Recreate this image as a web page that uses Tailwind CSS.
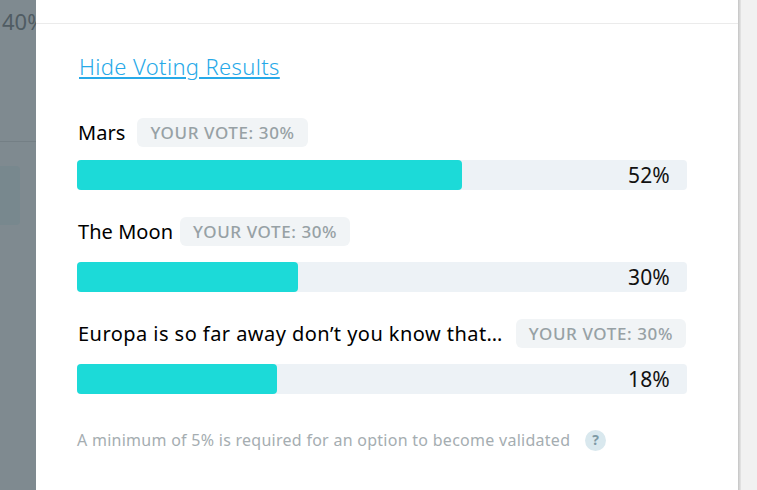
<!DOCTYPE html>
<html lang="en">
<head>
    <meta charset="UTF-8">
    <script src="https://cdn.jsdelivr.net/npm/@tailwindcss/browser@4"></script>
    <title>Voting results</title>
</head>
<body class="h-[490px] w-[757px] overflow-hidden bg-[#f1f1f1] font-['Noto_Sans',sans-serif]">
    <div class="flex h-[490px]">
        <!-- page behind the modal -->
        <aside class="relative w-[36px] shrink-0 overflow-hidden bg-[#7f8a90]">
            <span class="absolute left-[2px] top-[6px] text-[22px] leading-[30px] text-[#505c63]">40%</span>
            <div class="absolute left-0 top-[141px] h-px w-full bg-[#747f85]"></div>
            <div class="absolute left-[-10px] top-[166px] h-[59px] w-[30px] rounded bg-[#78888e]"></div>
        </aside>
        <!-- modal -->
        <main class="w-[702px] shrink-0 bg-white">
            <div class="h-[24px] border-b border-[#ebebeb]"></div>
            <div class="pl-[41px] pr-[51px] pt-[28px]">
                <a href="#" class="ml-[2px] text-[22px] font-light leading-[28px] tracking-[0.37px] text-[#27a9e8] underline">Hide Voting Results</a>
                <ul class="mt-[37px] flex flex-col gap-[27px]">
                    <li>
                        <div class="flex h-[29px] items-center gap-[12px]">
                            <span class="ml-px text-[20px] tracking-[0.05px] text-black">Mars</span>
                            <span class="flex h-[29px] items-center rounded-md bg-[#f1f4f6] px-[13px] text-[17px] font-medium tracking-[0.6px] text-[#97a1a5]">YOUR VOTE: 30%</span>
                        </div>
                        <div class="relative mt-[13px] flex h-[30px] items-center justify-end rounded-sm bg-[#edf2f6] pr-[17px] pt-[2px] text-[21px] tracking-[0.2px] text-[#111]">
                            <div class="absolute inset-y-0 left-0 w-[385px] rounded-sm bg-[#1cdad8]"></div>
                            <span class="relative">52%</span>
                        </div>
                    </li>
                    <li>
                        <div class="flex h-[29px] items-center gap-[7px]">
                            <span class="ml-px text-[20px] tracking-[0.05px] text-black">The Moon</span>
                            <span class="flex h-[29px] items-center rounded-md bg-[#f1f4f6] px-[13px] text-[17px] font-medium tracking-[0.6px] text-[#97a1a5]">YOUR VOTE: 30%</span>
                        </div>
                        <div class="relative mt-[16px] flex h-[30px] items-center justify-end rounded-sm bg-[#edf2f6] pr-[17px] pt-[2px] text-[21px] tracking-[0.2px] text-[#111]">
                            <div class="absolute inset-y-0 left-0 w-[221px] rounded-sm bg-[#1cdad8]"></div>
                            <span class="relative">30%</span>
                        </div>
                    </li>
                    <li>
                        <div class="flex h-[29px] items-center justify-between">
                            <span class="ml-px text-[20px] tracking-[0.45px] text-black">Europa is so far away don’t you know that…</span>
                            <span class="mr-px flex h-[29px] items-center rounded-md bg-[#f1f4f6] px-[13px] text-[17px] font-medium tracking-[0.6px] text-[#97a1a5]">YOUR VOTE: 30%</span>
                        </div>
                        <div class="relative mt-[16px] flex h-[30px] items-center justify-end rounded-sm bg-[#edf2f6] pr-[17px] pt-[2px] text-[21px] tracking-[0.2px] text-[#111]">
                            <div class="absolute inset-y-0 left-0 w-[200px] rounded-sm bg-[#1cdad8]"></div>
                            <span class="relative">18%</span>
                        </div>
                    </li>
                </ul>
                <p class="mt-[34px] flex items-center gap-[15px] text-base tracking-[0.27px] text-[#a5adb1]">
                    <span>A minimum of 5% is required for an option to become validated</span>
                    <span class="flex size-[21px] items-center justify-center rounded-full bg-[#d9e8ee] text-sm font-bold text-[#7e9aa6]">?</span>
                </p>
            </div>
        </main>
        <div class="w-[3px] shrink-0 bg-linear-to-r from-[#c4c4c4] to-[#e6e6e6]"></div>
    </div>
</body>
</html>
